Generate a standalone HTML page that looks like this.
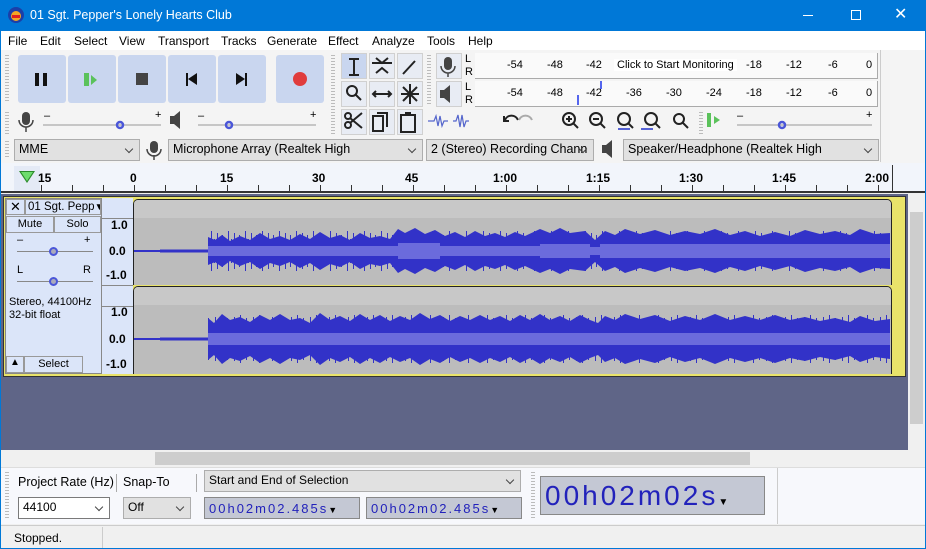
<!DOCTYPE html>
<html><head><meta charset="utf-8"><style>
*{box-sizing:border-box;margin:0;padding:0}
body{width:926px;height:549px;overflow:hidden;background:#0078d7;font-family:"Liberation Sans",sans-serif;font-size:12px;color:#000;position:relative}
.a{position:absolute}
.menu span{position:absolute;top:3px;font-size:12px}
.tb{background:#c9d6ef;border-radius:3px}
.sel{position:absolute;background:#e1e1e1;border:1px solid #adadad;font-size:12.5px;padding:2px 0 0 4px;white-space:nowrap;overflow:hidden}
.sel:after{content:"";position:absolute;right:7px;top:6px;width:5px;height:5px;border-right:1px solid #444;border-bottom:1px solid #444;transform:rotate(45deg)}
.grip{position:absolute;width:4px;background:repeating-linear-gradient(#bbb 0 1px,transparent 1px 3px)}
.rl{position:absolute;top:171px;font-weight:bold;font-size:12px;transform:translateX(-2px)}
.mt{position:absolute;font-size:11px}
.tbtn{position:absolute;width:26px;height:26px;background:#e8ecf4;border:1px solid #d0d0d0}
</style></head><body>
<div class="a" style="left:0;top:0;width:926px;height:31px;background:#0078d7"></div>
<div class="a" style="left:8px;top:7px;width:16px;height:16px;border-radius:50%;background:#1b3fa8"></div>
<div class="a" style="left:11px;top:11px;width:10px;height:10px;border-radius:50%;background:#f5a623"></div>
<div class="a" style="left:12px;top:15px;width:8px;height:3px;background:#e02020"></div>
<div class="a" style="left:30px;top:8px;color:#fff;font-size:12.5px">01 Sgt. Pepper's Lonely Hearts Club</div>
<div class="a" style="left:803px;top:15px;width:10px;height:1px;background:#fff"></div>
<div class="a" style="left:851px;top:10px;width:10px;height:10px;border:1px solid #fff"></div>
<div class="a" style="left:894px;top:4px;color:#fff;font-size:16px">✕</div>
<div class="a" style="left:1px;top:31px;width:924px;height:517px;background:#f0f0f0"></div>
<div class="a menu" style="left:1px;top:31px;width:924px;height:19px;background:#fff">
<span style="left:7px">File</span><span style="left:39px">Edit</span><span style="left:73px">Select</span><span style="left:118px">View</span><span style="left:157px">Transport</span><span style="left:220px">Tracks</span><span style="left:266px">Generate</span><span style="left:327px">Effect</span><span style="left:371px">Analyze</span><span style="left:426px">Tools</span><span style="left:467px">Help</span></div>
<div class="a" style="left:1px;top:50px;width:924px;height:113px;background:#f4f4f4"></div>
<div class="grip" style="left:5px;top:55px;height:48px"></div>
<div class="grip" style="left:5px;top:112px;height:22px"></div>
<div class="grip" style="left:5px;top:141px;height:18px"></div>
<div class="grip" style="left:331px;top:55px;height:80px"></div>
<div class="grip" style="left:427px;top:55px;height:50px"></div>
<div class="grip" style="left:699px;top:112px;height:22px"></div>
<div class="a tb" style="left:18px;top:55px;width:48px;height:48px"></div>
<div class="a tb" style="left:68px;top:55px;width:48px;height:48px"></div>
<div class="a tb" style="left:118px;top:55px;width:48px;height:48px"></div>
<div class="a tb" style="left:168px;top:55px;width:48px;height:48px"></div>
<div class="a tb" style="left:218px;top:55px;width:48px;height:48px"></div>
<div class="a tb" style="left:276px;top:55px;width:48px;height:48px"></div>
<div class="a" style="left:35px;top:73px;width:4px;height:13px;background:#111"></div>
<div class="a" style="left:43px;top:73px;width:4px;height:13px;background:#111"></div>
<div class="a" style="left:84px;top:73px;width:5px;height:13px;background:#5bc25b"></div>
<div class="a" style="left:91px;top:75px;width:0;height:0;border-left:6px solid #5bc25b;border-top:5px solid transparent;border-bottom:5px solid transparent"></div>
<div class="a" style="left:136px;top:73px;width:12px;height:12px;background:#444"></div>
<div class="a" style="left:186px;top:73px;width:2px;height:13px;background:#111"></div>
<div class="a" style="left:188px;top:73px;border-right:9px solid #111;border-top:6.5px solid transparent;border-bottom:6.5px solid transparent"></div>
<div class="a" style="left:236px;top:73px;border-left:9px solid #111;border-top:6.5px solid transparent;border-bottom:6.5px solid transparent"></div>
<div class="a" style="left:245px;top:73px;width:2px;height:13px;background:#111"></div>
<div class="a" style="left:293px;top:72px;width:14px;height:14px;border-radius:50%;background:#e03c3c"></div>
<div class="tbtn" style="left:341px;top:53px;background:#c9d6ef"></div>
<div class="tbtn" style="left:369px;top:53px"></div><div class="tbtn" style="left:397px;top:53px"></div>
<div class="tbtn" style="left:341px;top:81px"></div><div class="tbtn" style="left:369px;top:81px"></div><div class="tbtn" style="left:397px;top:81px"></div>
<div class="tbtn" style="left:341px;top:109px"></div><div class="tbtn" style="left:369px;top:109px"></div><div class="tbtn" style="left:397px;top:109px"></div>
<div class="tbtn" style="left:436px;top:53px"></div><div class="tbtn" style="left:436px;top:81px"></div>
<svg class="a" style="left:0;top:0" width="926" height="200">
<g stroke="#222" stroke-width="2" fill="none">
<path d="M349 59h10M354 59v16M349 75h10"/>
<path d="M372 63h20M376 58l6 5 6-5M376 73l6-5 6 5"/>
<path d="M403 74l12-13"/>
<circle cx="352" cy="91" r="5"/><path d="M356 95l5 5"/>
<path d="M373 94h18M376 91l-3 3 3 3M388 91l3 3-3 3"/>
<path d="M410 84v20M401 94h18M403 87l14 14M417 87l-14 14"/>
<circle cx="348" cy="125" r="3"/><circle cx="348" cy="116" r="3"/><path d="M350 123l12-10M350 118l12 10"/>
<rect x="373" y="116" width="10" height="15"/><path d="M377 113h10v14"/>
<rect x="401" y="115" width="14" height="17"/><path d="M405 113h6"/>
<path d="M518 120a7 7 0 0 0-13 0M504 116v5h5"/>
<circle cx="569" cy="119" r="6"/><path d="M573 123l5 5M566 119h6M569 116v6"/>
<circle cx="596" cy="119" r="6"/><path d="M600 123l5 5M593 119h6"/>
<circle cx="624" cy="119" r="6"/><path d="M628 123l5 5"/>
<circle cx="651" cy="119" r="6"/><path d="M655 123l5 5"/>
<circle cx="679" cy="119" r="5"/><path d="M683 123l5 5"/>
</g>
<path d="M532 120a7 7 0 0 0-13 0" stroke="#aaa" stroke-width="2" fill="none"/>
<path d="M618 129h12M641 129h12" stroke="#2233cc" stroke-width="1.5"/>
<g fill="#444"><rect x="444" y="57" width="8" height="13" rx="4"/><rect x="22" y="112" width="8" height="13" rx="4"/><rect x="150" y="141" width="8" height="12" rx="4"/></g>
<g stroke="#444" stroke-width="1.5" fill="none"><path d="M441 66a7 7 0 0 0 14 0M448 73v4M19 120a7 7 0 0 0 14 0M26 127v5M147 149a7 7 0 0 0 14 0M154 155v5"/></g>
<g fill="#444"><path d="M440 90h4l6-5v18l-6-5h-4z"/><path d="M170 116h4l6-5v18l-6-5h-4z"/><path d="M602 145h4l6-5v18l-6-5h-4z"/></g>
<g stroke="#5566cc" stroke-width="1.2" fill="none"><path d="M428 121h6l2-5 2 10 2-10 2 10 2-5h4M453 121h3l2-6 2 12 2-12 2 12 2-6h3"/></g>
<g stroke="#999"><path d="M43 125h118M198 125h118M737 125h135"/></g>
<g fill="none" stroke="#4a56d8" stroke-width="2.5"><circle cx="120" cy="125" r="3"/><circle cx="229" cy="125" r="3"/><circle cx="782" cy="125" r="3"/></g>
<path d="M709 113v14" stroke="#5bc25b" stroke-width="4"/><path d="M714 116l6 4-6 4z" fill="#5bc25b"/>
</svg>
<div class="mt" style="left:44px;top:110px">–</div><div class="mt" style="left:155px;top:109px">+</div>
<div class="mt" style="left:198px;top:110px">–</div><div class="mt" style="left:310px;top:109px">+</div>
<div class="mt" style="left:737px;top:110px">–</div><div class="mt" style="left:866px;top:109px">+</div>
<div class="a" style="left:475px;top:53px;width:403px;height:26px;border-bottom:1px solid #aaa;border-right:1px solid #aaa;background:#fafafa"></div>
<div class="a" style="left:475px;top:81px;width:403px;height:26px;border-bottom:1px solid #aaa;border-right:1px solid #aaa;background:#fafafa"></div>
<div class="mt" style="left:465px;top:53px">L</div><div class="mt" style="left:465px;top:66px">R</div>
<div class="mt" style="left:465px;top:81px">L</div><div class="mt" style="left:465px;top:94px">R</div>
<div class="mt" style="left:507px;top:59px">-54</div><div class="mt" style="left:547px;top:59px">-48</div><div class="mt" style="left:586px;top:59px">-42</div>
<div class="mt" style="left:614px;top:59px;background:#fff;padding:0 3px">Click to Start Monitoring</div>
<div class="mt" style="left:746px;top:59px">-18</div><div class="mt" style="left:786px;top:59px">-12</div><div class="mt" style="left:828px;top:59px">-6</div><div class="mt" style="left:866px;top:59px">0</div>
<div class="mt" style="left:507px;top:87px">-54</div><div class="mt" style="left:547px;top:87px">-48</div><div class="mt" style="left:586px;top:87px">-42</div><div class="mt" style="left:626px;top:87px">-36</div><div class="mt" style="left:666px;top:87px">-30</div><div class="mt" style="left:706px;top:87px">-24</div><div class="mt" style="left:746px;top:87px">-18</div><div class="mt" style="left:786px;top:87px">-12</div><div class="mt" style="left:828px;top:87px">-6</div><div class="mt" style="left:866px;top:87px">0</div>
<div class="a" style="left:600px;top:81px;width:2px;height:8px;background:#5566ee"></div>
<div class="a" style="left:577px;top:95px;width:2px;height:10px;background:#5566ee"></div>
<div class="a" style="left:880px;top:50px;width:1px;height:112px;background:#ccc"></div>
<div class="sel" style="left:14px;top:139px;width:126px;height:22px">MME</div>
<div class="sel" style="left:168px;top:139px;width:255px;height:22px">Microphone Array (Realtek High</div>
<div class="sel" style="left:426px;top:139px;width:168px;height:22px">2 (Stereo) Recording Chann</div>
<div class="sel" style="left:623px;top:139px;width:256px;height:22px">Speaker/Headphone (Realtek High</div>
<div class="a" style="left:1px;top:163px;width:924px;height:30px;background:#f2f5fb;border-bottom:2px solid #333"></div>
<div class="a" style="left:14px;top:166px;width:26px;height:25px;background:#e4eaf6"></div>
<div class="a" style="left:19px;top:171px;border-top:12px solid #2a8a2a;border-left:8px solid transparent;border-right:8px solid transparent"></div>
<div class="a" style="left:21px;top:172px;border-top:9px solid #6ddc6d;border-left:6px solid transparent;border-right:6px solid transparent"></div>
<div class="rl" style="left:40px">15</div><div class="rl" style="left:132px">0</div><div class="rl" style="left:222px">15</div><div class="rl" style="left:314px">30</div><div class="rl" style="left:407px">45</div><div class="rl" style="left:495px">1:00</div><div class="rl" style="left:588px">1:15</div><div class="rl" style="left:681px">1:30</div><div class="rl" style="left:774px">1:45</div><div class="rl" style="left:867px">2:00</div>
<div class="a" style="left:41px;top:185px;width:855px;height:6px;background:repeating-linear-gradient(90deg,#333 0 1px,transparent 1px 31px)"></div>
<div class="a" style="left:892px;top:165px;width:1px;height:27px;background:#333"></div>
<div class="a" style="left:1px;top:194px;width:907px;height:256px;background:#5f6587"></div>
<div class="a" style="left:908px;top:194px;width:17px;height:256px;background:#f0f0f0"></div>
<div class="a" style="left:910px;top:212px;width:13px;height:212px;background:#cdcdcd"></div>
<div class="a" style="left:1px;top:450px;width:924px;height:17px;background:#f0f0f0"></div>
<div class="a" style="left:155px;top:452px;width:595px;height:13px;background:#cdcdcd"></div>
<div class="a" style="left:3px;top:196px;width:903px;height:181px;background:#e9e36a;border:1px solid #333"></div>
<div class="a" style="left:5px;top:198px;width:97px;height:176px;background:#dbe5f9;border:1px solid #888"></div>
<div class="a" style="left:6px;top:199px;width:19px;height:16px;border:1px solid #999;text-align:center;font-size:13px;line-height:14px">✕</div>
<div class="a" style="left:25px;top:199px;width:76px;height:16px;border:1px solid #999;font-size:11.5px;padding-left:2px;white-space:nowrap;overflow:hidden;line-height:14px">01 Sgt. Pepp<span style="font-size:10px">▼</span></div>
<div class="a" style="left:6px;top:216px;width:48px;height:17px;border:1px solid #999;text-align:center;font-size:11px;line-height:15px">Mute</div>
<div class="a" style="left:54px;top:216px;width:47px;height:17px;border:1px solid #999;text-align:center;font-size:11px;line-height:15px">Solo</div>
<div class="mt" style="left:17px;top:234px">–</div><div class="mt" style="left:84px;top:234px">+</div>
<div class="mt" style="left:17px;top:264px">L</div><div class="mt" style="left:83px;top:264px">R</div>
<div class="a" style="left:17px;top:251px;width:76px;height:1px;background:#888"></div>
<div class="a" style="left:17px;top:281px;width:76px;height:1px;background:#888"></div>
<div class="a" style="left:49px;top:247px;width:9px;height:9px;border-radius:50%;border:2.5px solid #4a56d8;background:#aab"></div>
<div class="a" style="left:49px;top:277px;width:9px;height:9px;border-radius:50%;border:2.5px solid #4a56d8;background:#aab"></div>
<div class="a" style="left:9px;top:296px;font-size:11px;line-height:13px">Stereo, 44100Hz<br>32-bit float</div>
<div class="a" style="left:6px;top:356px;width:18px;height:17px;border:1px solid #999;font-size:10px;text-align:center">▲</div>
<div class="a" style="left:24px;top:356px;width:59px;height:17px;border:1px solid #999;font-size:11px;text-align:center;line-height:15px">Select</div>
<div class="a" style="left:102px;top:198px;width:31px;height:176px;background:#dbe5f9"></div>
<div class="a" style="left:102px;top:285px;width:31px;height:1px;background:#888"></div>
<div class="a" style="left:102px;top:218px;width:31px;height:1px;background:#888"></div>
<div class="a" style="left:102px;top:306px;width:31px;height:1px;background:#888"></div>
<div class="a" style="left:111px;top:218px;font-weight:bold;font-size:12px">1.0</div>
<div class="a" style="left:109px;top:244px;font-weight:bold;font-size:12px">0.0</div>
<div class="a" style="left:106px;top:268px;font-weight:bold;font-size:12px">-1.0</div>
<div class="a" style="left:111px;top:305px;font-weight:bold;font-size:12px">1.0</div>
<div class="a" style="left:109px;top:332px;font-weight:bold;font-size:12px">0.0</div>
<div class="a" style="left:106px;top:357px;font-weight:bold;font-size:12px">-1.0</div>
<div class="a" style="left:133px;top:199px;width:759px;height:86px;background:#bcbcbc;border:1px solid #222;border-radius:5px 5px 0 0;border-bottom:none"></div>
<div class="a" style="left:134px;top:200px;width:757px;height:18px;background:#c8c8c8;border-radius:4px 4px 0 0"></div>
<div class="a" style="left:133px;top:286px;width:759px;height:88px;background:#bcbcbc;border:1px solid #222;border-radius:5px 5px 0 0;border-bottom:none"></div>
<div class="a" style="left:134px;top:287px;width:757px;height:18px;background:#c8c8c8;border-radius:4px 4px 0 0"></div>
<svg class="a" style="left:0;top:0" width="926" height="400">
<defs>
<pattern id="sp1" x="0" y="221" width="17" height="60" patternUnits="userSpaceOnUse">
<g stroke="#3232c8" stroke-width="1"><path d="M1.5 14v32M4.5 20v20M7.5 10v40M10.5 18v24M13.5 12v36M15.5 22v16"/></g>
</pattern>
<pattern id="sp2" x="5" y="309" width="19" height="60" patternUnits="userSpaceOnUse">
<g stroke="#3232c8" stroke-width="1"><path d="M1.5 8v44M4.5 16v28M7.5 6v48M10.5 14v32M13.5 9v42M16.5 18v24"/></g>
</pattern>
<path id="w1" d="M208 251L208 237 215 240 222 235 230 241 240 236 250 240 260 233 270 239 280 236 290 240 300 234 310 239 320 232 330 238 340 235 350 240 360 233 370 238 380 236 390 239 398 229 405 233 415 228 425 234 435 230 445 236 455 232 465 237 475 231 485 236 495 233 505 237 515 232 525 236 540 229 550 233 560 228 570 233 585 231 595 240 605 231 615 235 625 229 640 234 655 230 670 235 685 231 700 234 715 229 730 235 745 231 760 236 775 232 790 236 805 230 820 234 835 231 850 235 860 229 875 234 890 233 890 251z"/>
<path id="w2" d="M208 339L208 318 214 323 222 314 230 320 240 317 250 322 260 315 270 320 280 314 290 320 300 318 310 323 320 313 330 320 340 316 350 321 360 314 370 320 380 315 390 321 400 316 410 320 420 313 430 319 440 315 450 321 460 316 470 320 480 315 490 320 500 316 510 321 520 315 530 320 540 314 550 320 560 316 570 321 580 315 590 320 598 323 605 316 615 320 625 314 640 319 655 315 670 321 685 316 700 320 715 314 730 320 745 316 760 320 775 315 790 320 805 317 820 321 835 318 850 322 860 316 875 321 890 319 890 339z"/>
<path id="r1" d="M208 251V246H398V243H440V246H540V244H590V247H600V244H890V251z"/>
<path id="r2" d="M208 339V333H890V339z"/>
</defs>
<rect x="208" y="221" width="682" height="60" fill="url(#sp1)"/>
<rect x="208" y="309" width="682" height="60" fill="url(#sp2)"/>
<g fill="#3232c8"><use href="#w1"/><use href="#w1" transform="translate(0,502) scale(1,-1)"/><use href="#w2"/><use href="#w2" transform="translate(0,678) scale(1,-1)"/></g>
<g fill="#6b6bdc"><use href="#r1"/><use href="#r1" transform="translate(0,502) scale(1,-1)"/><use href="#r2"/><use href="#r2" transform="translate(0,678) scale(1,-1)"/></g>
<path d="M134 251H208M134 339H208" stroke="#3232c8" stroke-width="2"/>
<path d="M160 251H208M160 339H208" stroke="#3232c8" stroke-width="3"/>
</svg>
<div class="a" style="left:1px;top:467px;width:924px;height:57px;background:#f7f8fc;border-top:1px solid #ddd"></div>
<div class="grip" style="left:5px;top:472px;height:48px"></div>
<div class="grip" style="left:531px;top:472px;height:48px"></div>
<div class="a" style="left:18px;top:475px;font-size:12.5px">Project Rate (Hz)</div>
<div class="a" style="left:116px;top:474px;width:1px;height:18px;background:#aaa"></div>
<div class="a" style="left:123px;top:475px;font-size:12.5px">Snap-To</div>
<div class="a" style="left:196px;top:474px;width:1px;height:18px;background:#aaa"></div>
<div class="sel" style="left:18px;top:497px;width:92px;height:22px;background:#fff;border-color:#7a7a7a;font-size:12px">44100</div>
<div class="sel" style="left:123px;top:497px;width:68px;height:22px;font-size:12px">Off</div>
<div class="sel" style="left:204px;top:470px;width:317px;height:22px;font-size:12px">Start and End of Selection</div>
<div class="a" style="left:204px;top:497px;width:156px;height:22px;background:#c4c8d4;border:1px solid #888;color:#2222bb;font-size:13px;padding:3px 0 0 4px;letter-spacing:2px;white-space:nowrap">00h02m02.485s<span style="color:#000;font-size:9px">▼</span></div>
<div class="a" style="left:366px;top:497px;width:156px;height:22px;background:#c4c8d4;border:1px solid #888;color:#2222bb;font-size:13px;padding:3px 0 0 4px;letter-spacing:2px;white-space:nowrap">00h02m02.485s<span style="color:#000;font-size:9px">▼</span></div>
<div class="a" style="left:540px;top:476px;width:225px;height:39px;background:#c4c8d4;border:1px solid #888;color:#2222bb;font-size:28px;padding:3px 0 0 4px;letter-spacing:3px;white-space:nowrap">00h02m02s<span style="color:#000;font-size:10px">▼</span></div>
<div class="a" style="left:777px;top:468px;width:1px;height:56px;background:#ccc"></div>
<div class="a" style="left:1px;top:525px;width:924px;height:23px;background:#f0f0f0;border-top:1px solid #ccc"></div>
<div class="a" style="left:14px;top:531px;font-size:12px">Stopped.</div>
<div class="a" style="left:102px;top:527px;width:1px;height:21px;background:#ccc"></div>
</body></html>
